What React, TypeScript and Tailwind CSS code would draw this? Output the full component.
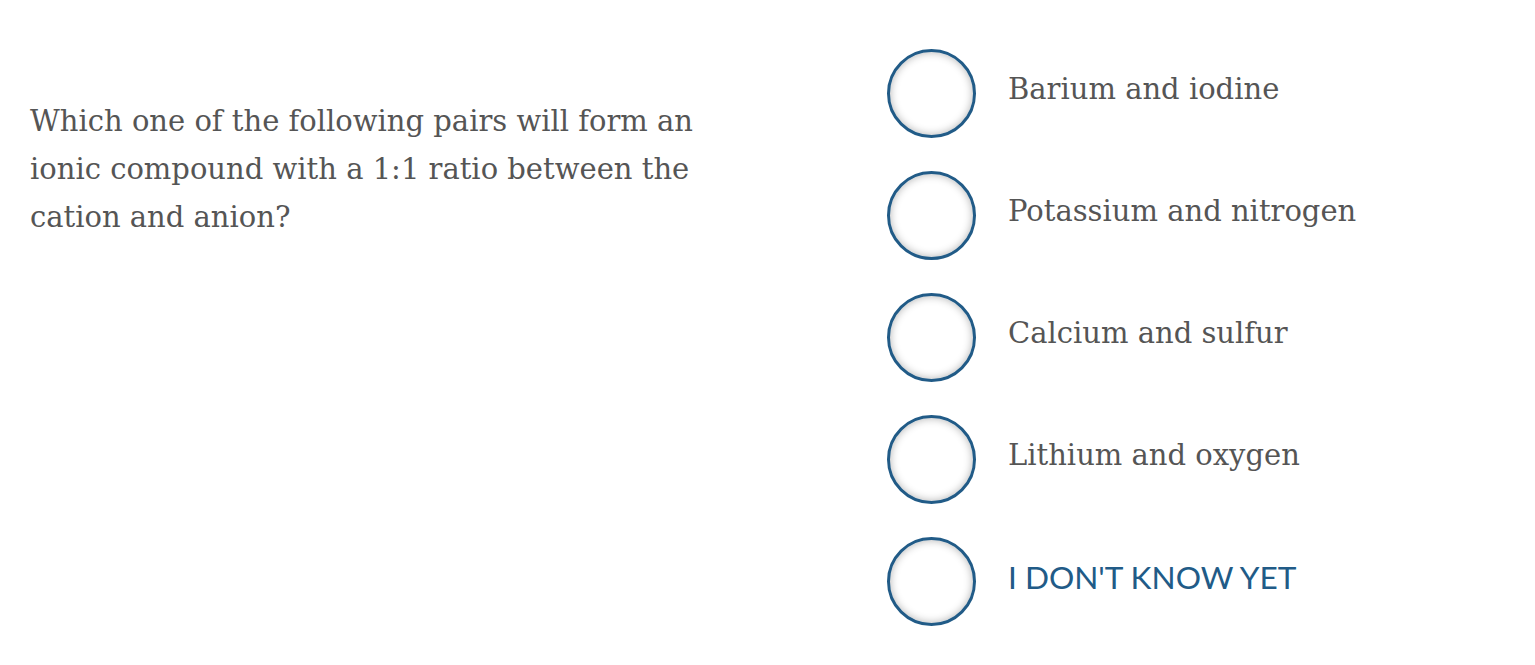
import React from "react";

const options = [
  "Barium and iodine",
  "Potassium and nitrogen",
  "Calcium and sulfur",
  "Lithium and oxygen",
];

function Circle() {
  return (
    <div className="w-[89px] h-[89px] shrink-0 rounded-full border-[3px] border-[#215b87] bg-white shadow-[inset_0_0_9px_rgba(0,0,0,0.3)]" />
  );
}

export default function App() {
  return (
    <div className="w-[1535px] h-[665px] bg-white flex" style={{ fontFamily: '"DejaVu Serif", serif' }}>
      <div className="w-[887px] shrink-0 pl-[30px] pt-[97px] text-[29px] leading-[48px] text-[#555555]">
        Which one of the following pairs will form an
        <br />
        ionic compound with a 1:1 ratio between the
        <br />
        cation and anion?
      </div>
      <div className="flex flex-col gap-[33px] pt-[49px]">
        {options.map((o) => (
          <div key={o} className="flex items-center">
            <Circle />
            <span className="ml-[32px] -mt-[8px] text-[29px] text-[#555555] whitespace-nowrap">{o}</span>
          </div>
        ))}
        <div className="flex items-center">
          <Circle />
          <span
            className="ml-[32px] -mt-[8px] text-[31.6px] text-[#215b87] whitespace-nowrap"
            style={{ fontFamily: "Lato, sans-serif" }}
          >
            I DON'T KNOW YET
          </span>
        </div>
      </div>
    </div>
  );
}
